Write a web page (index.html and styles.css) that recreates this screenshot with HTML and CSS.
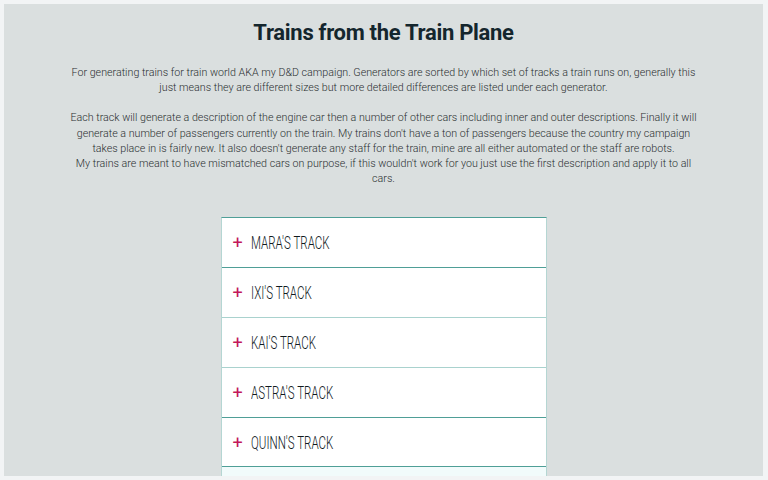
FILE: index.html
```html
<!DOCTYPE html>
<html>
<head>
<meta charset="utf-8">
<link rel="stylesheet" href="styles.css">
</head>
<body>
<div class="panel">
  <h1 class="title">Trains from the Train Plane</h1>
  <div class="intro">
    <p>For generating trains for train world AKA my D&amp;D campaign. Generators are sorted by which set of tracks a train runs on, generally this just means they are different sizes but more detailed differences are listed under each generator.</p>
    <p>Each track will generate a description of the engine car then a number of other cars including inner and outer descriptions. Finally it will generate a number of passengers currently on the train. My trains don't have a ton of passengers because the country my campaign takes place in is fairly new. It also doesn't generate any staff for the train, mine are all either automated or the staff are robots.<br>My trains are meant to have mismatched cars on purpose, if this wouldn't work for you just use the first description and apply it to all cars.</p>
  </div>
  <div class="accordion">
    <div class="item dark"><span class="plus">+</span><span class="label">MARA'S TRACK</span></div>
    <div class="item light"><span class="plus">+</span><span class="label">IXI'S TRACK</span></div>
    <div class="item light"><span class="plus">+</span><span class="label">KAI'S TRACK</span></div>
    <div class="item dark"><span class="plus">+</span><span class="label">ASTRA'S TRACK</span></div>
    <div class="item dark"><span class="plus">+</span><span class="label">QUINN'S TRACK</span></div>
    <div class="item next"></div>
  </div>
</div>
</body>
</html>
```
FILE: styles.css
```css
html, body {
  margin: 0;
  height: 100%;
}
body {
  background: #f2f4f5;
  padding: 4px 5px 4px 4px;
  box-sizing: border-box;
  overflow: hidden;
}
.panel {
  background: #dadfdf;
  height: 100%;
  overflow: hidden;
  font-family: Roboto, "Liberation Sans", sans-serif;
}
.title {
  margin: 0;
  padding-top: 16px;
  text-align: center;
  font-size: 22px;
  line-height: 26px;
  font-weight: 700;
  color: #14262d;
  letter-spacing: -0.3px;
}
.intro {
  width: 640px;
  margin: 19px auto 0;
  text-align: center;
  font-size: 10.7px;
  line-height: 15.2px;
  font-weight: 300;
  color: #2a2f31;
}
.intro p {
  margin: 0 0 15px;
}
.accordion {
  width: 324px;
  margin: 31px auto 0;
  background: #fff;
  border-left: 1px solid #b5d6d3;
  border-right: 1px solid #b5d6d3;
  border-top: 1px solid #4f9f97;
}
.item {
  height: 48.8px;
  display: flex;
  align-items: center;
  padding-left: 11px;
  border-bottom: 1px solid #4f9f97;
}
.item.light {
  border-bottom-color: #a9d2ce;
}
.item.next {
  background: #f1fbfb;
  border-bottom: none;
}
.plus {
  color: #c2185b;
  font-size: 18px;
  font-weight: 400;
  width: 18px;
  line-height: 1;
  margin-top: 1px;
}
.label {
  display: inline-block;
  font-size: 18px;
  font-weight: 300;
  color: #111a1e;
  transform: scaleX(0.64);
  transform-origin: left center;
  white-space: nowrap;
}
```
